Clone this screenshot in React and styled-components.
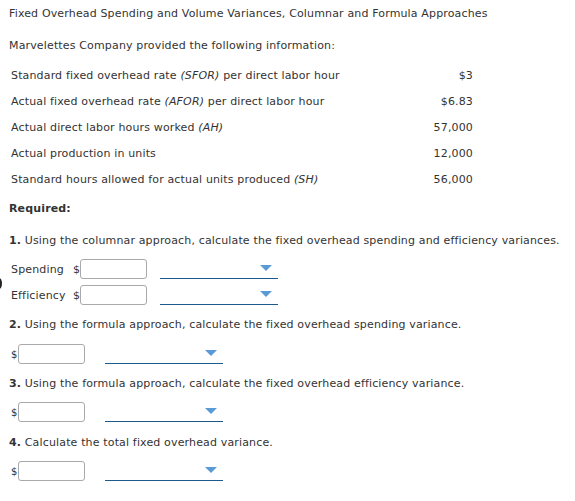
import React from 'react';
import styled, { createGlobalStyle } from 'styled-components';

const GlobalStyle = createGlobalStyle`
  body {
    margin: 0;
    background: #fff;
    font-family: 'DejaVu Sans', Verdana, sans-serif;
    font-size: 11px;
    letter-spacing: 0.15px;
    color: #333;
  }
`;

const Page = styled.div`
  position: relative;
  padding: 7px 0 0 9px;
  width: 566px;
`;

const Title = styled.div`
  line-height: 14px;
`;

const Intro = styled.div`
  margin-top: 18px;
  line-height: 14px;
`;

const DataTable = styled.div`
  margin-top: 9px;
  width: 462px;
  padding-left: 2px;
`;

const DataRow = styled.div`
  display: flex;
  justify-content: space-between;
  align-items: center;
  height: 26px;
`;

const Em = styled.i`
  font-style: italic;
`;

const Required = styled.div`
  margin-top: 10px;
  font-weight: bold;
  line-height: 14px;
`;

const Question = styled.div`
  margin-top: ${props => props.gap}px;
  line-height: 14px;
`;

const Num = styled.b`
  font-weight: bold;
`;

const AnswerRow = styled.div`
  display: flex;
  align-items: center;
  height: 26px;
  padding-left: 2px;
  margin-top: ${props => props.gap || 0}px;
`;

const Label = styled.span`
  width: 62px;
`;

const Dollar = styled.span`
  font-size: ${props => (props.small ? 10 : 11)}px;
  width: 7px;
`;

const Input = styled.div`
  width: 65px;
  height: 18px;
  border: 1px solid #a9a9a9;
  border-radius: 3px;
  background: #fff;
`;

const Select = styled.div`
  position: relative;
  margin-left: ${props => props.offset}px;
  width: 118px;
  height: 20px;
  border-bottom: 1px solid #1c5a8d;
  margin-top: -1px;
`;

const Arrow = styled.span`
  position: absolute;
  right: 6px;
  top: 7px;
  width: 0;
  height: 0;
  border-left: 6.5px solid transparent;
  border-right: 6.5px solid transparent;
  border-top: 6px solid #5b9bd5;
`;

const EdgeMark = styled.span`
  position: absolute;
  left: -4px;
  top: 278px;
  width: 6px;
  height: 11px;
  border-radius: 50%;
  background: #222;
`;

const data = [
  [<>Standard fixed overhead rate <Em>(SFOR)</Em> per direct labor hour</>, '$3'],
  [<>Actual fixed overhead rate <Em>(AFOR)</Em> per direct labor hour</>, '$6.83'],
  [<>Actual direct labor hours worked <Em>(AH)</Em></>, '57,000'],
  ['Actual production in units', '12,000'],
  [<>Standard hours allowed for actual units produced <Em>(SH)</Em></>, '56,000'],
];

function Answer({ label, gap }) {
  if (label) {
    return (
      <AnswerRow gap={gap}>
        <Label>{label}</Label>
        <Dollar>$</Dollar>
        <Input />
        <Select offset={13}><Arrow /></Select>
      </AnswerRow>
    );
  }
  return (
    <AnswerRow gap={gap}>
      <Dollar small>$</Dollar>
      <Input />
      <Select offset={20}><Arrow /></Select>
    </AnswerRow>
  );
}

export default function App() {
  return (
    <Page>
      <GlobalStyle />
      <EdgeMark />
      <Title>Fixed Overhead Spending and Volume Variances, Columnar and Formula Approaches</Title>
      <Intro>Marvelettes Company provided the following information:</Intro>
      <DataTable>
        {data.map(([label, value], i) => (
          <DataRow key={i}>
            <span>{label}</span>
            <span>{value}</span>
          </DataRow>
        ))}
      </DataTable>
      <Required>Required:</Required>
      <Question gap={18}><Num>1.</Num> Using the columnar approach, calculate the fixed overhead spending and efficiency variances.</Question>
      <Answer label="Spending" gap={8} />
      <Answer label="Efficiency" />
      <Question gap={10}><Num>2.</Num> Using the formula approach, calculate the fixed overhead spending variance.</Question>
      <Answer gap={9} />
      <Question gap={10}><Num>3.</Num> Using the formula approach, calculate the fixed overhead efficiency variance.</Question>
      <Answer gap={8} />
      <Question gap={11}><Num>4.</Num> Calculate the total fixed overhead variance.</Question>
      <Answer gap={8} />
    </Page>
  );
}
